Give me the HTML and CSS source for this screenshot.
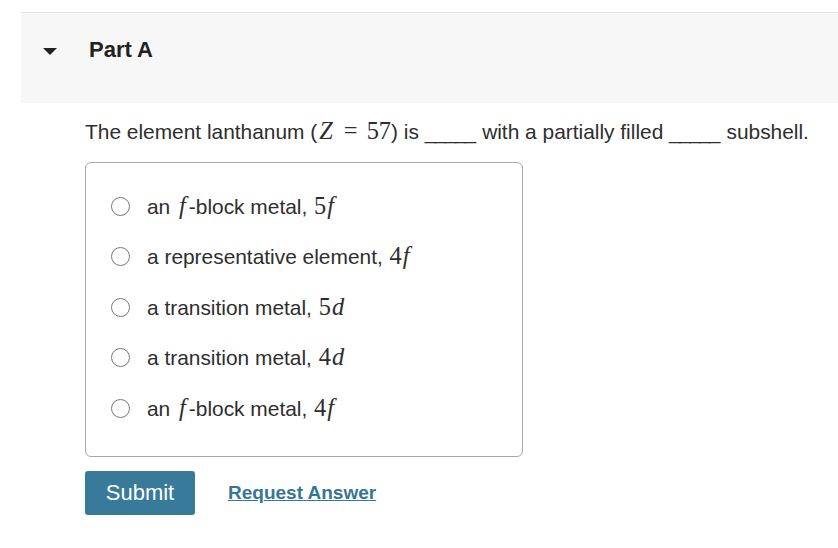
FILE: index.html
```html
<!DOCTYPE html>
<html>
<head>
<meta charset="utf-8">
<link rel="stylesheet" href="styles.css">
</head>
<body>
<div class="part-header">
  <span class="caret"></span>
  <h2 class="part-title">Part A</h2>
</div>
<div class="content">
  <p class="question">The element lanthanum (<span class="math"><i>Z</i><span class="eq">=</span>57</span>) is <span class="blank">_____</span> with a partially filled <span class="blank">_____</span> subshell.</p>
  <div class="choices">
    <label class="choice"><span class="radio"></span><span class="label">an <span class="math"><i class="mi">f</i></span>-block metal, <span class="math">5<i>f</i></span></span></label>
    <label class="choice"><span class="radio"></span><span class="label">a representative element, <span class="math">4<i>f</i></span></span></label>
    <label class="choice"><span class="radio"></span><span class="label">a transition metal, <span class="math">5<i>d</i></span></span></label>
    <label class="choice"><span class="radio"></span><span class="label">a transition metal, <span class="math">4<i>d</i></span></span></label>
    <label class="choice"><span class="radio"></span><span class="label">an <span class="math"><i class="mi">f</i></span>-block metal, <span class="math">4<i>f</i></span></span></label>
  </div>
  <div class="actions">
    <button class="submit">Submit</button>
    <a class="request" href="#">Request Answer</a>
  </div>
</div>
</body>
</html>
```
FILE: styles.css
```css
html, body {
  margin: 0;
  padding: 0;
  background: #fff;
}
body {
  font-family: "Liberation Sans", Arial, sans-serif;
  color: #2e2e2e;
}
.part-header {
  margin: 12px 0 0 21px;
  height: 91px;
  background: #f7f7f7;
  border-top: 1px solid #e2e2e2;
  display: flex;
  align-items: center;
  box-sizing: border-box;
  padding-left: 22px;
  padding-bottom: 16px;
}
.caret {
  width: 0;
  height: 0;
  border-left: 7px solid transparent;
  border-right: 7px solid transparent;
  border-top: 7px solid #222;
  margin-top: 2px;
}
.part-title {
  margin: 0 0 0 32px;
  font-size: 22px;
  font-weight: bold;
  color: #222;
}
.content {
  padding-left: 85px;
}
.question {
  margin: 16px 0 0 0;
  font-size: 20.9px;
  line-height: 26px;
}
.math {
  font-family: "Liberation Serif", "DejaVu Serif", serif;
  font-size: 1.17em;
  line-height: 1;
}
.math i {
  font-family: "Liberation Serif", "DejaVu Serif", serif;
  font-style: italic;
}
.math i:last-child {
  margin-left: 1px;
  margin-right: 1px;
}
.question .math i {
  margin-left: 2px;
  margin-right: 2px;
}
.eq {
  margin: 0 9px;
}
.blank {
  letter-spacing: -1.7px;
  margin-right: 2px;
}
.choices {
  margin-top: 17px;
  width: 438px;
  height: 295px;
  box-sizing: border-box;
  border: 1px solid #aaa;
  border-radius: 6px;
  padding: 18px 0 0 25px;
  display: flex;
  flex-direction: column;
}
.choice {
  display: flex;
  align-items: center;
  height: 50.5px;
  font-size: 20.9px;
}
.radio {
  width: 17px;
  height: 17px;
  border: 1.5px solid #777;
  border-radius: 50%;
  flex: none;
  margin-right: 17px;
}
.label i.mi {
  margin: 0 3px 0 2px;
}
.label > .math {
  margin-left: 1px;
}
.actions {
  margin-top: 14px;
  display: flex;
  align-items: center;
}
.submit {
  width: 110px;
  height: 44px;
  border: none;
  border-radius: 3px;
  background: #377a9a;
  color: #fff;
  font-family: "Liberation Sans", Arial, sans-serif;
  font-size: 22px;
  padding: 0;
}
.request {
  margin-left: 33px;
  font-size: 19px;
  font-weight: bold;
  color: #357697;
  text-decoration: underline;
}
```
